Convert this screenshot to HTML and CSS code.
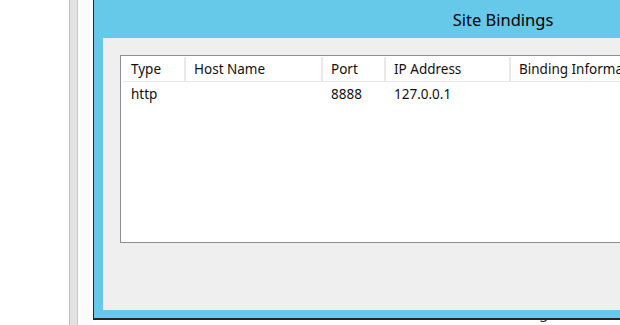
FILE: index.html
```html
<!DOCTYPE html>
<html lang="en">
<head>
	<meta charset="utf-8">
	<link rel="stylesheet" href="styles.css">
</head>
<body>
	<div class="desktop">
		<div class="sidebar"></div>
		<div class="splitter"></div>
		<div class="gap"></div>
		<div class="dialog">
			<div class="title-bar">Site Bindings</div>
			<div class="panel">
				<div class="list-box">
					<div class="list-row list-head">
						<div class="col col-type">Type</div>
						<div class="col col-host">Host Name</div>
						<div class="col col-port">Port</div>
						<div class="col col-ip">IP Address</div>
						<div class="col col-info">Binding Information</div>
					</div>
					<div class="list-row">
						<div class="col col-type">http</div>
						<div class="col col-host"></div>
						<div class="col col-port">8888</div>
						<div class="col col-ip">127.0.0.1</div>
						<div class="col col-info"></div>
					</div>
				</div>
			</div>
		</div>
		<span class="behind">g</span>
	</div>
</body>
</html>
```

FILE: styles.css
```css
body {
	margin: 0;
	background: white;
	font-family: "Noto Sans", "Open Sans", sans-serif;
	color: #111;
}
.desktop {
	position: relative;
	display: flex;
	width: 620px;
	height: 325px;
	overflow: hidden;
}
.sidebar {
	flex: 0 0 69px;
	background: white;
}
.splitter {
	flex: 0 0 7px;
	background: #e2e2e2;
	border-left: 1px solid #bdbdbd;
	border-right: 1px solid #c8c8c8;
}
.gap {
	flex: 0 0 15px;
	background: #fcfcfc;
}
.dialog {
	position: relative;
	z-index: 1;
	flex: 0 0 auto;
	width: 810px;
	height: 320px;
	padding: 0 0 8px 9px;
	box-sizing: border-box;
	background: #66c9e9;
	border-left: 1px solid #262626;
	border-bottom: 2px solid #262626;
	display: flex;
	flex-direction: column;
}
.title-bar {
	height: 38px;
	display: flex;
	align-items: center;
	justify-content: center;
	font-size: 16.5px;
	color: #000;
}
.panel {
	flex: 1;
	background: #efefef;
	padding: 17px 0 0 17px;
}
.list-box {
	height: 186px;
	background: white;
	border: 1px solid #8c8e94;
	border-right: none;
}
.list-row {
	display: flex;
	height: 24px;
	align-items: center;
	font-size: 13.5px;
}
.list-head {
	height: 24px;
	margin: 1px 0 0 2px;
	border-bottom: 1px solid #e6e6e6;
}
.list-head .col {
	border-right: 2px solid #e8e8e8;
	height: 100%;
	display: flex;
	align-items: center;
}
.col {
	flex: 0 0 auto;
	box-sizing: border-box;
	padding-left: 8px;
	white-space: nowrap;
}
.col-type { width: 63px; }
.col-host { width: 137px; }
.col-port { width: 63px; }
.col-ip { width: 125px; }
.col-info { width: 200px; }
.list-row:not(.list-head) .col-type {
	width: 65px;
	padding-left: 10px;
}
.behind {
	position: absolute;
	left: 539px;
	top: 302px;
	font-size: 15px;
	color: #333;
}
```
